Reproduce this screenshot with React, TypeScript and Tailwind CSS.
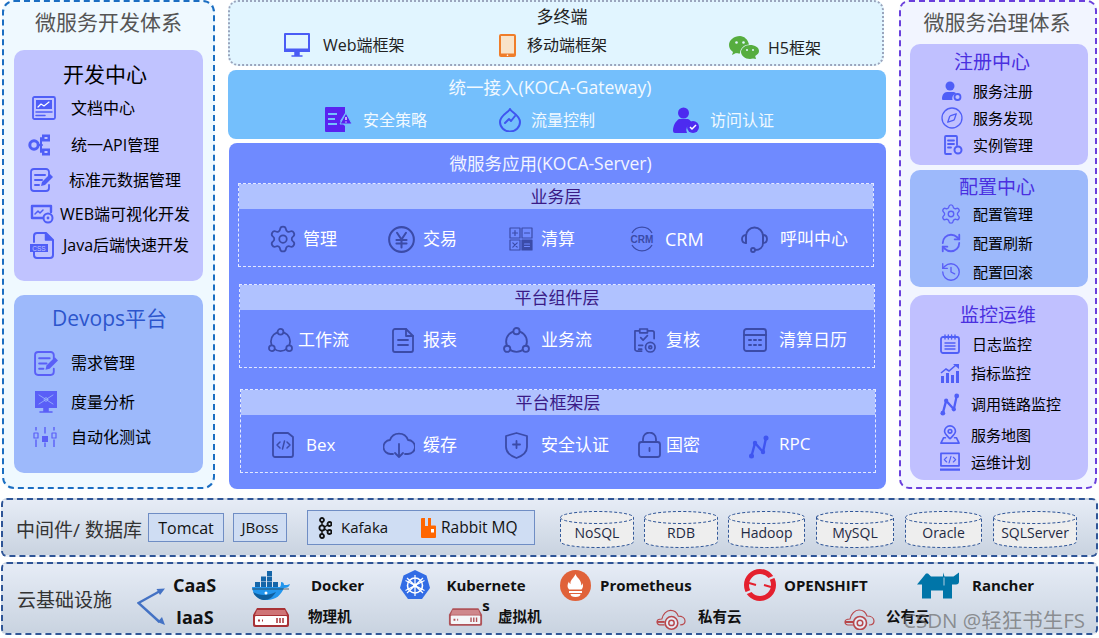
import type { ReactNode } from 'react'
import { RefreshCw, History, Settings, Compass } from 'lucide-react'

type IconProps = { className?: string }

function Ico({ className, children, box = '0 0 24 24' }: IconProps & { children: ReactNode; box?: string }) {
  return (
    <svg viewBox={box} fill="none" stroke="currentColor" strokeWidth="1.8" strokeLinecap="round" strokeLinejoin="round" className={className}>
      {children}
    </svg>
  )
}

/* ---- side panel icons ---- */
const DocChart = ({ className }: IconProps) => (
  <Ico className={className}>
    <rect x="1" y="1" width="22" height="22" rx="1.5" />
    <rect x="4" y="4" width="16" height="9" fill="currentColor" stroke="none" />
    <path d="M6 11l3-3 3 2 5-4" stroke="#fff" strokeWidth="1.2" />
    <path d="M4 16h16M4 19.5h9" strokeWidth="1.5" />
  </Ico>
)
const ApiNodes = ({ className }: IconProps) => (
  <Ico className={className}>
    <circle cx="6" cy="12" r="4.2" strokeWidth="3" />
    <path d="M10 12h4M13 5v14" strokeWidth="2" />
    <rect x="14" y="1.5" width="8" height="7" fill="currentColor" stroke="none" />
    <rect x="14" y="15.5" width="8" height="7" fill="currentColor" stroke="none" />
    <rect x="16.5" y="4" width="3" height="2" fill="#c0c3ff" stroke="none" />
    <rect x="16.5" y="18" width="3" height="2" fill="#c0c3ff" stroke="none" />
  </Ico>
)
const EditDoc = ({ className }: IconProps) => (
  <Ico className={className}>
    <path d="M19 8V4a3 3 0 0 0-3-3H4a3 3 0 0 0-3 3v16a3 3 0 0 0 3 3h12a3 3 0 0 0 3-3v-3" />
    <path d="M5 7h10M5 12h7M5 17h4" strokeWidth="2" />
    <path d="M11 18l1-4 8-8 3 3-8 8z" fill="currentColor" stroke="none" />
  </Ico>
)
const WebGear = ({ className }: IconProps) => (
  <Ico className={className} box="0 0 24 20">
    <path d="M13 14H2V2h19v6" strokeWidth="2.4" />
    <path d="M5 10l3-3 2 2 3-3" strokeWidth="1.5" />
    <circle cx="18" cy="14" r="4.5" strokeWidth="2" />
    <circle cx="18" cy="14" r="1.4" fill="currentColor" stroke="none" />
  </Ico>
)
const CssFile = ({ className }: IconProps) => (
  <Ico className={className} box="0 0 24 27">
    <path d="M4 10V4a3 3 0 0 1 3-3h9l7 7v15a3 3 0 0 1-3 3H7a3 3 0 0 1-3-3v-3" strokeWidth="2" />
    <path d="M15.5 1v7h7" fill="currentColor" strokeWidth="1.5" />
    <rect x="0" y="12" width="18" height="8" fill="currentColor" stroke="none" />
    <text x="9" y="18.5" textAnchor="middle" fontSize="6.5" fill="#c0c3ff" stroke="none" fontFamily="Liberation Sans">CSS</text>
  </Ico>
)
const MonitorNet = ({ className }: IconProps) => (
  <Ico className={className} box="0 0 22 22">
    <rect x="0" y="0" width="22" height="17" fill="currentColor" stroke="none" />
    <path d="M4 4l14 9M18 4L4 13" stroke="#9db9fb" strokeWidth="0.8" />
    <circle cx="11" cy="8.5" r="1.8" stroke="#9db9fb" strokeWidth="0.8" />
    <path d="M9 17h4v3H9zM5 21h12" fill="currentColor" strokeWidth="1.6" />
  </Ico>
)
const Sliders = ({ className }: IconProps) => (
  <Ico className={className} box="0 0 24 20">
    <path d="M3 0v3M3 13v7M12 0v6M12 16v4M21 0v3M21 13v7" strokeWidth="1.4" />
    <rect x="1" y="6" width="4" height="5" strokeWidth="1.2" />
    <rect x="19" y="6" width="4" height="5" strokeWidth="1.2" />
    <rect x="9" y="9" width="6" height="6" fill="currentColor" stroke="none" />
  </Ico>
)

/* ---- top ---- */
const WebScreen = ({ className }: IconProps) => (
  <Ico className={className} box="0 0 26 24">
    <rect x="1" y="1" width="24" height="17" fill="#e1f5ff" strokeWidth="2" />
    <rect x="0" y="15.5" width="26" height="3.5" fill="currentColor" stroke="none" />
    <path d="M11 19h4v3h-4zM8 23h10" fill="currentColor" strokeWidth="1.5" />
  </Ico>
)
const Tablet = ({ className }: IconProps) => (
  <Ico className={className} box="0 0 17 23">
    <rect x="0" y="0" width="17" height="23" rx="2" fill="currentColor" stroke="none" />
    <rect x="2" y="2" width="13" height="17.5" fill="#f8e3c9" stroke="none" />
    <circle cx="8.5" cy="21.2" r="0.8" fill="#fff" stroke="none" />
  </Ico>
)
const WeChat = ({ className }: IconProps) => (
  <svg viewBox="0 0 30 23" className={className}>
    <path d="M11 0C5 0 0 4 0 9c0 3 1.500 5 4 7l-1 3 4-2c1 .3 2 .5 4 .5 0-5 4-9 9-9-1-5-5-8.500-9-8.500z" fill="#56ad3f" />
    <path d="M21 9c-5 0-9 3.500-9 7s4 7 9 7c1 0 2-.2 3-.5l3 .5-.8-3c2.500-1.500 3.800-3 3.800-5 0-3.500-4-6-9-6z" fill="#56ad3f" />
    <circle cx="7.500" cy="6.500" r="1.300" fill="#e1f5ff" /><circle cx="14.500" cy="6.500" r="1.300" fill="#e1f5ff" />
    <circle cx="18" cy="14" r="1" fill="#e1f5ff" /><circle cx="24" cy="14" r="1" fill="#e1f5ff" />
  </svg>
)
const SecPolicy = ({ className }: IconProps) => (
  <svg viewBox="0 0 27 25" className={className}>
    <path d="M0 1a1 1 0 0 1 1-1h19v6l-5 8 5 5v6H1a1 1 0 0 1-1-1z" fill="#5a22f0" />
    <path d="M3 7h9M3 12h7M3 17h9" stroke="#74bffc" strokeWidth="1.800" />
    <path d="M21 6l6 11H15z" fill="#5a22f0" stroke="#74bffc" strokeWidth="1" />
    <path d="M21 10v3M21 14.500v1" stroke="#fff" strokeWidth="1.300" />
  </svg>
)
const FlowDrop = ({ className }: IconProps) => (
  <Ico className={className} box="0 0 22 24">
    <path d="M11 1c1 3 10 6 10 13a10 9.500 0 0 1-20 0C1 7 10 4 11 1z" strokeWidth="2" />
    <path d="M6 15l4-4 2 2 4-5" strokeWidth="2" />
  </Ico>
)
const UserCheck = ({ className }: IconProps) => (
  <svg viewBox="0 0 26 26" className={className}>
    <circle cx="10.500" cy="6" r="5.500" fill="#4d2bf0" />
    <path d="M0 24c0-6 3-10 6-12h9c2 1 3 2 4 4a7 7 0 0 0-5 10H2a2 2 0 0 1-2-2z" fill="#4d2bf0" />
    <circle cx="20" cy="20" r="6" fill="#4d2bf0" />
    <path d="M17 20l2 2 4-4" fill="none" stroke="#fff" strokeWidth="1.500" />
  </svg>
)

/* ---- server ---- */
const YenCircle = ({ className }: IconProps) => (
  <Ico className={className}>
    <circle cx="12" cy="12" r="11" />
    <path d="M8 6l4 6 4-6M7.500 12.500h9M7.500 15.500h9M12 12v7" />
  </Ico>
)
const CalcGrid = ({ className }: IconProps) => (
  <Ico className={className}>
    <g strokeWidth="1.200">
      <rect x="1" y="1" width="10" height="10" /><rect x="13" y="1" width="10" height="10" />
      <rect x="1" y="13" width="10" height="10" />
      <rect x="13" y="13" width="10" height="10" fill="currentColor" />
      <path d="M3.500 6h5M6 3.500v5M15.500 6h5M3.800 15.800l4.400 4.400M8.200 15.800l-4.400 4.400" />
      <path d="M15.500 17h5M15.500 19.500h5" stroke="#6f8aff" />
    </g>
  </Ico>
)
const CrmRing = ({ className }: IconProps) => (
  <svg viewBox="0 0 26 26" className={className}>
    <path d="M3 7a11.500 11.500 0 0 1 20 0M3 19a11.500 11.500 0 0 0 20 0" fill="none" stroke="currentColor" strokeWidth="1.300" />
    <text x="13" y="16.500" textAnchor="middle" fontSize="10" fontWeight="700" fill="currentColor" fontFamily="Liberation Sans">CRM</text>
  </svg>
)
const Headset = ({ className }: IconProps) => (
  <Ico className={className} box="0 0 27 27">
    <path d="M5 17V10a8.500 8.500 0 0 1 17 0v7c0 4-3 7-8 7" />
    <path d="M5 9C2 9 1 11 1 13s1 4 4 4zM22 9c3 0 4 2 4 4s-1 4-4 4z" />
    <circle cx="12" cy="24" r="2" />
  </Ico>
)
const FlowRing = ({ className }: IconProps) => (
  <Ico className={className} box="0 0 26 26">
    <circle cx="13" cy="14" r="10" />
    <circle cx="13" cy="4" r="3" fill="#6f8aff" />
    <circle cx="4" cy="21" r="3" fill="#6f8aff" />
    <circle cx="22" cy="21" r="3" fill="#6f8aff" />
  </Ico>
)
const Report = ({ className }: IconProps) => (
  <Ico className={className} box="0 0 22 25">
    <path d="M14 1H3a2 2 0 0 0-2 2v19a2 2 0 0 0 2 2h16a2 2 0 0 0 2-2V8z" />
    <path d="M14 1v7h7M6 12h10M6 17h10" />
  </Ico>
)
const CheckGear = ({ className }: IconProps) => (
  <Ico className={className} box="0 0 24 26">
    <path d="M8 24H3a2 2 0 0 1-2-2V3h4M15 3h4a2 2 0 0 1 2 2v6" />
    <path d="M6 1h8v4H6zM7 10l2.500 2.500L14 8M5 18h4M5 22h3" />
    <circle cx="17" cy="20" r="5" /><circle cx="17" cy="20" r="1.500" />
  </Ico>
)
const Calendar = ({ className }: IconProps) => (
  <Ico className={className}>
    <rect x="1" y="1" width="22" height="22" rx="2.500" />
    <path d="M1 7h22" />
    <path d="M6 12h2M11 12h2M16 12h2M6 17h2M11 17h2M16 17h2" strokeWidth="2" />
  </Ico>
)
const CodeFile = ({ className }: IconProps) => (
  <Ico className={className} box="0 0 23 26">
    <path d="M21 5V23a2 2 0 0 1-2 2H3a2 2 0 0 1-2-2V3a2 2 0 0 1 2-2h13z" />
    <path d="M8 10l-3 3 3 3M15 10l3 3-3 3M12.500 9l-2 8" strokeWidth="1.500" />
  </Ico>
)
const CloudDown = ({ className }: IconProps) => (
  <Ico className={className} box="0 0 32 28">
    <path d="M10 23H8a7 7 0 0 1-1-14 9.500 9.500 0 0 1 18 0 7 7 0 0 1 0 14h-3" />
    <path d="M16 13v13M12 22l4 4 4-4" />
  </Ico>
)
const ShieldPlus = ({ className }: IconProps) => (
  <Ico className={className} box="0 0 23 27">
    <path d="M11.500 1L22 4v11c0 5-5 9-10.500 11C6 24 1 20 1 15V4z" />
    <path d="M11.500 9v7M8 12.500h7" />
  </Ico>
)
const Lock = ({ className }: IconProps) => (
  <Ico className={className} box="0 0 23 26">
    <rect x="1" y="10" width="21" height="15" rx="2.500" />
    <path d="M5 10V7a6.500 6.500 0 0 1 13 0v3M11.500 16v3" />
  </Ico>
)
const RouteN = ({ className }: IconProps) => (
  <svg viewBox="0 0 20 24" fill="none" className={className}>
    <path d="M2.500 21L6 8l8 9 3-14" stroke="currentColor" strokeWidth="2.400" strokeLinejoin="round" />
    <circle cx="2.500" cy="21" r="2.500" fill="currentColor" />
    <circle cx="17" cy="3" r="2.500" fill="currentColor" />
    <circle cx="6" cy="8" r="2.200" fill="currentColor" />
    <circle cx="14" cy="17" r="2.200" fill="currentColor" />
  </svg>
)

/* ---- right panel ---- */
const UserGear = ({ className }: IconProps) => (
  <svg viewBox="0 0 20 20" className={className}>
    <circle cx="8" cy="5" r="4.500" fill="currentColor" />
    <path d="M0 18c0-4 2-7 5-7h6c1.500 0 2.500.5 3 1.500a5 5 0 0 0-3.500 6.500H1a1 1 0 0 1-1-1z" fill="currentColor" />
    <circle cx="15.500" cy="16" r="3" fill="none" stroke="currentColor" strokeWidth="1.800" />
  </svg>
)
const DocGear = ({ className }: IconProps) => (
  <Ico className={className} box="0 0 20 20">
    <path d="M8 19H3a1 1 0 0 1-1-1V2a1 1 0 0 1 1-1h10a1 1 0 0 1 1 1v8" />
    <path d="M5 5.500h6M5 9h6M5 12.500h3" />
    <circle cx="15" cy="15" r="3.500" strokeWidth="2" />
  </Ico>
)
const Notepad = ({ className }: IconProps) => (
  <Ico className={className} box="0 0 20 20" >
    <rect x="1" y="3" width="18" height="16" rx="2" />
    <path d="M5 1v4M8.300 1v4M11.600 1v4M15 1v4M5 9h10M5 12h10M5 15h10" strokeWidth="1.400" />
  </Ico>
)
const ChartUp = ({ className }: IconProps) => (
  <svg viewBox="0 0 20 20" className={className}>
    <path d="M1 13h3v7H1zM6 10h3v10H6zM11 12h3v8h-3zM16 8h3v12h-3z" fill="currentColor" />
    <path d="M1 10l5-4 3 2 7-6" fill="none" stroke="currentColor" strokeWidth="1.600" />
    <path d="M13 1h6v5z" fill="currentColor" />
  </svg>
)
const MapPinBase = ({ className }: IconProps) => (
  <Ico className={className} box="0 0 22 20">
    <path d="M11 14C8 11 5 9 5 6a6 6 0 0 1 12 0c0 3-3 5-6 8z" />
    <circle cx="11" cy="6" r="2" />
    <path d="M6 13H4l-3 6h20l-3-6h-2" />
  </Ico>
)
const CodeScreen = ({ className }: IconProps) => (
  <Ico className={className} box="0 0 21 20">
    <rect x="1" y="1" width="19" height="13" />
    <path d="M7 5L4.500 7.500 7 10M14 5l2.500 2.500L14 10M11.500 4l-2 7" strokeWidth="1.200" />
    <path d="M0 18h21" strokeWidth="2.400" />
  </Ico>
)

/* ---- bottom ---- */
const KafkaLogo = ({ className }: IconProps) => (
  <Ico className={className} box="0 0 14 22">
    <circle cx="4" cy="3" r="2" /><circle cx="4" cy="11" r="2.600" /><circle cx="4" cy="19" r="2" />
    <circle cx="11.500" cy="7" r="2" /><circle cx="11.500" cy="15" r="2" />
    <path d="M4 5v3.500M4 13.500V17M6.500 10l3.300-2M6.500 12l3.300 2" strokeWidth="1.400" />
  </Ico>
)
const RabbitLogo = ({ className }: IconProps) => (
  <svg viewBox="0 0 15 20" className={className}>
    <path d="M1 0h3v8h3V0h3v7.500h4a1 1 0 0 1 1 1V19a1 1 0 0 1-1 1H1a1 1 0 0 1-1-1V1a1 1 0 0 1 1-1z" fill="#ff6600" />
    <rect x="10" y="11" width="3" height="3.500" fill="#ffffff" />
  </svg>
)
const DockerLogo = ({ className }: IconProps) => (
  <svg viewBox="0 0 38 29" className={className}>
    <path d="M3 7h5v5H3zM9 7h5v5H9zM15 7h5v5h-5zM21 7h5v5h-5zM9 1.500h5v5H9zM15 1.500h5v5h-5zM15-4h5v5h-5z" transform="translate(0 4)" fill="#1565a8" />
    <path d="M0 16h28c1-1 1-3 1-5 2 0 3 1 3 3 2 0 4 0 6-1-1 3-3 4-6 4-3 7-8 12-17 12C6 29 1 24 0 16z" fill="#2396ed" />
    <path d="M1 21c6 4 15 4 23 0-3 5-7 8-11 8-5 0-10-3-12-8z" fill="#0f5f9e" />
    <circle cx="14" cy="22" r="1.500" fill="#fff" />
    <path d="M0 18h37" stroke="#263238" strokeWidth=".7" />
  </svg>
)
const K8sLogo = ({ className }: IconProps) => (
  <svg viewBox="0 0 30 30" className={className}>
    <path d="M15 0l11.500 5.500L30 18l-8 11H8L0 18 3.500 5.500z" fill="#326ce5" />
    <circle cx="15" cy="15.500" r="7.500" fill="none" stroke="#fff" strokeWidth="1.600" />
    <circle cx="15" cy="15.500" r="2" fill="#fff" />
    <path d="M15 5v21M5.500 10.500l19 10M24.500 10.500l-19 10M7 23l16-15M23 23L7 8" stroke="#fff" strokeWidth="1.200" />
  </svg>
)
const PromLogo = ({ className }: IconProps) => (
  <svg viewBox="0 0 31 31" className={className}>
    <circle cx="15.500" cy="15.500" r="15.500" fill="#e0623a" />
    <path d="M15.500 4c1 3 3 4 4.500 6.500 1.500 2.500 1 4 1.500 5 .5-.7 1-1.500 1-2.500 1 3 .5 5-1 6.500H9c-2-2-2-5 0-8 0 1 .5 2 1.500 2.500-.5-3 1-4 2.500-6 1-1.300 2-2.500 2.500-4z" fill="#fff" />
    <path d="M9 21h13v2H9zM10.500 24h10a5 3 0 0 1-10 0z" fill="#fff" />
  </svg>
)
const OpenShiftLogo = ({ className }: IconProps) => (
  <svg viewBox="0 0 32 36" fill="none" className={className}>
    <circle cx="16" cy="18" r="13.500" stroke="#e4202e" strokeWidth="5" />
    <path d="M20 14l12-5M0 27l12-5" stroke="#dde4f0" strokeWidth="2.400" />
    <path d="M5 16l7 2M20 18l7 2" stroke="#e4202e" strokeWidth="2" />
  </svg>
)
const RancherLogo = ({ className }: IconProps) => (
  <svg viewBox="0 0 42 28" className={className}>
    <path d="M0 13L9 2h2l3 3h12V1l1.500 4h9L42 1v9a3 3 0 0 1-3 3h-4v14h-9v-8H14v8H5V13z" fill="#0075a8" />
    <path d="M27 6v8" stroke="#dde4f0" strokeWidth=".8" />
  </svg>
)
const ServerRed = ({ className }: IconProps) => (
  <svg viewBox="0 0 38 21" fill="none" className={className}>
    <path d="M5 1h28l4 7v10a2 2 0 0 1-2 2H3a2 2 0 0 1-2-2V8z" fill="#a83236" />
    <path d="M5 3h28l2 5H3z" fill="#cf7476" />
    <rect x="3" y="9" width="32" height="9" rx="1" fill="#fff" />
    <path d="M6 13.500h2M10 13.500h1" stroke="#a83236" strokeWidth="2" />
    <path d="M28 11v5M31 11v5M25 11v5" stroke="#a83236" strokeWidth="1.500" />
  </svg>
)
const CloudRed = ({ className }: IconProps) => (
  <svg viewBox="0 0 31 21" fill="none" className={className}>
    <path d="M9 16H4a3 3 0 0 1-3-3c0-1.500 1.500-3 5-3 1-5 5-9 9-9s7 3 8 6c4 0 7 2 7 5s-2 4-5 4" stroke="#b8474b" strokeWidth="1.200" />
    <path d="M1 13h8" stroke="#b8474b" strokeWidth="2" />
    <circle cx="16" cy="14" r="6.500" fill="#e6ecf6" stroke="#b8474b" strokeWidth="1.600" />
    <circle cx="16" cy="14" r="2.800" stroke="#b8474b" strokeWidth="1.500" />
  </svg>
)
const BranchArrows = ({ className }: IconProps) => (
  <svg viewBox="0 0 28 38" fill="none" className={className}>
    <path d="M24 2.500L1.500 15l21 19" stroke="#4472c4" strokeWidth="2.400" />
    <path d="M28 .5l-8.500.5 3.500 6zM28 37l-3-8-4.500 5z" fill="#4472c4" />
  </svg>
)

/* ---- blocks ---- */
function Item({ icon, label, className, gap }: { icon: ReactNode; label: string; className: string; gap: string }) {
  return (
    <div className={`flex items-center ${className}`}>
      {icon}
      <span className={`whitespace-nowrap text-black ${gap}`}>{label}</span>
    </div>
  )
}

function Cell({ icon, label, className = '', gap }: { icon: ReactNode; label: string; className?: string; gap: string }) {
  return (
    <div className={`flex shrink-0 items-center ${className}`}>
      {icon}
      <span className={`whitespace-nowrap ${gap}`}>{label}</span>
    </div>
  )
}

function Layer({ title, className, children }: { title: string; className: string; children: ReactNode }) {
  return (
    <div className={`flex h-[84px] w-[636px] flex-col border border-dashed border-[#e4e9ff] ${className}`}>
      <div className="flex h-[25px] shrink-0 items-center justify-center bg-[#b0c2ff] text-[17px] text-[#3a1a86]">{title}</div>
      <div className="flex flex-1 items-center pt-[3px] text-[17px] text-white">{children}</div>
    </div>
  )
}

function Cylinder({ label, className }: { label: string; className: string }) {
  return (
    <div className={`relative mt-[4px] flex h-[37px] shrink-0 items-center justify-center pt-[5px] text-[14px] text-[#1f2a44] ${className}`}>
      <svg viewBox="0 0 80 37" preserveAspectRatio="none" className="absolute inset-0 h-full w-full">
        <path d="M.5 6.500C.5 3 18 .5 40 .5s39.500 2.500 39.500 6v24c0 3.500-17.500 6-39.500 6S.5 34 .5 30.500z" fill="#eeeeee" stroke="#2f5597" strokeWidth="1" strokeDasharray="3 2" vectorEffect="non-scaling-stroke" />
        <path d="M.5 6.500C.5 10 18 12.500 40 12.500s39.500-2.500 39.500-6" fill="none" stroke="#2f5597" strokeWidth="1" strokeDasharray="3 2" vectorEffect="non-scaling-stroke" />
      </svg>
      <span className="relative">{label}</span>
    </div>
  )
}

const Bold = ({ children, className = '' }: { children: ReactNode; className?: string }) => (
  <span className={`whitespace-nowrap font-bold text-[#111] ${className}`}>{children}</span>
)

export default function App() {
  return (
    <div className="relative flex h-[638px] w-[1099px] flex-col overflow-hidden bg-white font-['Open_Sans','Noto_Sans_CJK_SC',sans-serif]">
      <div className="flex h-[490px] shrink-0">
        {/* Left */}
        <div className="ml-[2px] h-[489px] w-[213px] rounded-[12px] border-2 border-dashed border-[#1b6ec2] bg-[#eff9ff]">
          <div className="flex h-[48px] items-center justify-center pb-[7px] text-[21px] text-[#555]">微服务开发体系</div>
          <div className="ml-[10px] h-[231px] w-[189px] rounded-[10px] bg-[#c0c3ff] text-[16px] text-[#4f5ef7]">
            <div className="flex h-[46px] items-center justify-center pr-[7px] pt-[4px] text-[21px] text-black">开发中心</div>
            <Item className="h-[24px] pl-[18px]" gap="ml-[15px]" label="文档中心" icon={<DocChart className="size-[24px]" />} />
            <Item className="mt-[13px] h-[24px] pl-[14px]" gap="ml-[19px]" label="统一API管理" icon={<ApiNodes className="size-[24px]" />} />
            <Item className="mt-[11px] h-[24px] pl-[16px]" gap="ml-[15px]" label="标准元数据管理" icon={<EditDoc className="size-[24px]" />} />
            <Item className="mt-[10px] h-[24px] pl-[16px]" gap="ml-[6px]" label="WEB端可视化开发" icon={<WebGear className="h-[20px] w-[24px]" />} />
            <Item className="mt-[7px] h-[24px] pl-[16px]" gap="ml-[9px]" label="Java后端快速开发" icon={<CssFile className="h-[27px] w-[24px] shrink-0" />} />
          </div>
          <div className="ml-[10px] mt-[14px] h-[178px] w-[189px] rounded-[10px] bg-[#9db9fb] text-[16px] text-[#5a5ff7]">
            <div className="flex h-[48px] items-center justify-center pl-[2px] text-[21px] text-[#2c55cc]">Devops平台</div>
            <Item className="mt-[8px] h-[24px] pl-[20px]" gap="ml-[12px]" label="需求管理" icon={<EditDoc className="h-[25px] w-[25px]" />} />
            <Item className="mt-[15px] h-[24px] pl-[21px]" gap="ml-[14px]" label="度量分析" icon={<MonitorNet className="size-[22px]" />} />
            <Item className="mt-[11px] h-[24px] pl-[19px]" gap="ml-[14px]" label="自动化测试" icon={<Sliders className="h-[20px] w-[24px]" />} />
          </div>
        </div>

        {/* Center */}
        <div className="ml-[13px] w-[658px]">
          <div className="h-[66px] w-[656px] rounded-[10px] border-2 border-dotted border-[#9aa5bd] bg-[#e1f5ff] text-[16px] text-[#222]">
            <div className="flex h-[30px] items-center justify-center pl-[12px] text-[17px]">多终端</div>
            <div className="flex h-[26px] items-center pl-[54px]">
              <Cell className="w-[215px]" gap="ml-[13px]" label="Web端框架" icon={<WebScreen className="h-[24px] w-[26px] text-[#4a5cf5]" />} />
              <Cell className="w-[230px]" gap="ml-[11px]" label="移动端框架" icon={<Tablet className="h-[23px] w-[17px] text-[#ef7d2a]" />} />
              <Cell className="mt-[5px]" gap="ml-[9px]" label="H5框架" icon={<WeChat className="h-[23px] w-[30px]" />} />
            </div>
          </div>
          <div className="mt-[4px] h-[69px] rounded-[8px] bg-[#74bffc] text-[16px] text-[#f2f9ff]">
            <div className="flex h-[34px] items-center justify-center pr-[14px] text-[17.5px]">统一接入(KOCA-Gateway)</div>
            <div className="flex h-[30px] items-center pl-[97px] pt-[1px]">
              <Cell className="w-[174px]" gap="ml-[11px]" label="安全策略" icon={<SecPolicy className="h-[25px] w-[27px]" />} />
              <Cell className="w-[174px]" gap="ml-[10px]" label="流量控制" icon={<FlowDrop className="h-[24px] w-[22px] text-[#3f55f0]" />} />
              <Cell gap="ml-[11px]" label="访问认证" icon={<UserCheck className="size-[26px]" />} />
            </div>
          </div>
          <div className="ml-[1px] mt-[4px] h-[346px] w-[657px] rounded-[8px] bg-[#6f8aff]">
            <div className="flex h-[40px] items-center justify-center pr-[14px] pt-[1px] text-[17.5px] text-[#f2f4ff]">微服务应用(KOCA-Server)</div>

            <Layer title="业务层" className="ml-[9px]">
              <div className="flex items-center pl-[31px] text-[#3b4ba8]">
                <Cell className="w-[118px]" gap="ml-[8px] text-white" label="管理" icon={<Settings className="-mx-[2.5px] size-[30px]" strokeWidth={1.4} />} />
                <Cell className="w-[121px]" gap="ml-[8px] text-white" label="交易" icon={<YenCircle className="size-[27px]" />} />
                <Cell className="w-[120px]" gap="ml-[8px] text-white" label="清算" icon={<CalcGrid className="size-[24px]" />} />
                <Cell className="w-[112px]" gap="ml-[10px] text-[18px] text-white" label="CRM" icon={<CrmRing className="size-[26px]" />} />
                <Cell gap="ml-[12px] text-white" label="呼叫中心" icon={<Headset className="size-[27px]" />} />
              </div>
            </Layer>

            <Layer title="平台组件层" className="ml-[10px] mt-[17px]">
              <div className="flex items-center pl-[28px] text-[#3b4ba8]">
                <Cell className="w-[124px]" gap="ml-[5px] text-white" label="工作流" icon={<FlowRing className="size-[25px]" />} />
                <Cell className="w-[111px]" gap="ml-[9px] text-white" label="报表" icon={<Report className="h-[25px] w-[22px]" />} />
                <Cell className="w-[131px]" gap="ml-[11px] text-white" label="业务流" icon={<FlowRing className="size-[27px]" />} />
                <Cell className="w-[109px]" gap="ml-[9px] text-white" label="复核" icon={<CheckGear className="h-[25px] w-[23px]" />} />
                <Cell gap="ml-[12px] text-white" label="清算日历" icon={<Calendar className="size-[24px]" />} />
              </div>
            </Layer>

            <Layer title="平台框架层" className="ml-[11px] mt-[21px]">
              <div className="flex items-center pl-[31px] text-[#3b4ba8]">
                <Cell className="w-[111px]" gap="ml-[11px] text-white" label="Bex" icon={<CodeFile className="h-[26px] w-[23px]" />} />
                <Cell className="w-[122px]" gap="ml-[8px] text-white" label="缓存" icon={<CloudDown className="h-[28px] w-[32px]" />} />
                <Cell className="w-[133px]" gap="ml-[13px] text-white" label="安全认证" icon={<ShieldPlus className="h-[27px] w-[23px]" />} />
                <Cell className="w-[111px]" gap="ml-[5px] text-white" label="国密" icon={<Lock className="h-[26px] w-[23px]" />} />
                <Cell gap="ml-[10px] -mt-[2px] text-white" label="RPC" icon={<RouteN className="mt-[4px] h-[24px] w-[20px] text-[#3f55f0]" />} />
              </div>
            </Layer>
          </div>
        </div>

        {/* Right */}
        <div className="ml-[13px] h-[489px] w-[198px] rounded-[10px] border-2 border-dashed border-[#6a3fdc] bg-[#f2f5ff]">
          <div className="flex h-[42px] items-center justify-center pr-[2px] text-[21px] text-[#555]">微服务治理体系</div>
          <div className="ml-[9px] h-[121px] w-[178px] rounded-[10px] bg-[#c0c0ff] text-[15px] text-[#4f5ef7]">
            <div className="flex h-[36px] items-center justify-center pr-[14px] text-[19px] text-[#4a2fe0]">注册中心</div>
            <Item className="mt-[1px] h-[20px] pl-[32px]" gap="ml-[11px]" label="服务注册" icon={<UserGear className="size-[20px]" />} />
            <Item className="mt-[7px] h-[20px] pl-[30px]" gap="ml-[9px]" label="服务发现" icon={<Compass className="size-[24px]" strokeWidth={1.3} />} />
            <Item className="mt-[7px] h-[20px] pl-[33px]" gap="ml-[10px]" label="实例管理" icon={<DocGear className="size-[20px]" />} />
          </div>
          <div className="ml-[9px] mt-[5px] h-[117px] w-[178px] rounded-[10px] bg-[#9db9fb] text-[15px] text-[#5a5ff7]">
            <div className="flex h-[34px] items-center justify-center pr-[4px] pt-[1px] text-[19px] text-[#4a2fe0]">配置中心</div>
            <Item className="h-[20px] pl-[30px]" gap="ml-[11px]" label="配置管理" icon={<Settings className="size-[22px]" strokeWidth={1.5} />} />
            <Item className="mt-[9px] h-[20px] pl-[30px]" gap="ml-[11px]" label="配置刷新" icon={<RefreshCw className="size-[22px]" strokeWidth={2} />} />
            <Item className="mt-[9px] h-[20px] pl-[30px]" gap="ml-[11px]" label="配置回滚" icon={<History className="size-[22px]" strokeWidth={1.5} />} />
          </div>
          <div className="ml-[9px] mt-[8px] h-[185px] w-[178px] rounded-[14px] bg-[#c0c0ff] text-[15px] text-[#4f5ef7]">
            <div className="flex h-[39px] items-center justify-center pr-[2px] pt-[1px] text-[19px] text-[#4a2fe0]">监控运维</div>
            <Item className="h-[20px] pl-[30px]" gap="ml-[12px]" label="日志监控" icon={<Notepad className="size-[20px]" />} />
            <Item className="mt-[9px] h-[20px] pl-[30px]" gap="ml-[11px]" label="指标监控" icon={<ChartUp className="size-[20px]" />} />
            <Item className="mt-[11px] h-[20px] pl-[30px]" gap="ml-[11px]" label="调用链路监控" icon={<RouteN className="h-[23px] w-[20px] shrink-0" />} />
            <Item className="mt-[11px] h-[20px] pl-[30px]" gap="ml-[11px]" label="服务地图" icon={<MapPinBase className="h-[20px] w-[20px]" />} />
            <Item className="mt-[7px] h-[20px] pl-[30px]" gap="ml-[11px]" label="运维计划" icon={<CodeScreen className="h-[20px] w-[20px]" />} />
          </div>
        </div>
      </div>

      {/* Middleware */}
      <div className="ml-[1px] mt-[8px] flex h-[59px] w-[1097px] items-center rounded-[6px] border-2 border-dashed border-[#2f5597] bg-gradient-to-b from-[#e6ecf6] to-[#c9d3e0] pl-[13px]">
        <div className="w-[125px] whitespace-nowrap pt-[5px] text-[19px] text-[#333]">中间件/ 数据库</div>
        <div className="ml-[7px] flex h-[29px] w-[76px] items-center justify-center border border-[#6f8dc4] bg-[#cfddf3] text-[16px] text-[#111]">Tomcat</div>
        <div className="ml-[9px] flex h-[29px] w-[54px] items-center justify-center border border-[#6f8dc4] bg-[#cfddf3] text-[15px] text-[#111]">JBoss</div>
        <div className="ml-[20px] flex h-[35px] w-[228px] items-center border border-[#6f8dc4] bg-[#cfddf3] pl-[10px] text-[15px] text-[#111]">
          <Cell className="w-[103px]" gap="ml-[9px]" label="Kafaka" icon={<KafkaLogo className="h-[22px] w-[14px] text-[#111]" />} />
          <Cell gap="ml-[5px] text-[15.5px]" label="Rabbit MQ" icon={<RabbitLogo className="h-[20px] w-[15px]" />} />
        </div>
        <Cylinder label="NoSQL" className="ml-[25px] w-[74px]" />
        <Cylinder label="RDB" className="ml-[10px] w-[74px]" />
        <Cylinder label="Hadoop" className="ml-[10px] w-[77px]" />
        <Cylinder label="MySQL" className="ml-[11px] w-[78px]" />
        <Cylinder label="Oracle" className="ml-[11px] w-[77px]" />
        <Cylinder label="SQLServer" className="ml-[11px] w-[84px]" />
      </div>

      {/* Cloud infrastructure */}
      <div className="ml-[1px] mt-[5px] flex h-[73px] w-[1097px] rounded-[6px] border-2 border-dashed border-[#2f5597] bg-gradient-to-b from-[#e6ecf6] to-[#c9d3e0] pl-[14px]">
        <div className="w-[95px] shrink-0 self-center whitespace-nowrap pt-[3px] text-[19px] text-[#333]">云基础设施</div>
        <BranchArrows className="ml-[25px] mt-[24px] h-[38px] w-[28px] shrink-0" />
        <div className="ml-[8px] flex flex-col pt-[8px] text-[15px]">
          <div className="flex h-[26px] items-center">
            <Bold className="w-[79px] text-[18px]">CaaS</Bold>
            <div className="flex w-[148px] shrink-0 items-center">
              <DockerLogo className="h-[29px] w-[38px]" />
              <Bold className="ml-[21px]">Docker</Bold>
            </div>
            <div className="flex w-[160px] shrink-0 items-center">
              <K8sLogo className="size-[30px]" />
              <span className="ml-[16px] h-[20px] w-[80px] break-all text-center font-bold leading-[20px] text-[#111]">Kubernetes</span>
            </div>
            <div className="flex w-[184px] shrink-0 items-center">
              <PromLogo className="size-[31px]" />
              <Bold className="ml-[9px]">Prometheus</Bold>
            </div>
            <div className="flex w-[173px] shrink-0 items-center">
              <OpenShiftLogo className="h-[36px] w-[32px]" />
              <Bold className="ml-[8px]">OPENSHIFT</Bold>
            </div>
            <div className="flex items-center">
              <RancherLogo className="h-[29px] w-[42px]" />
              <Bold className="ml-[13px]">Rancher</Bold>
            </div>
          </div>
          <div className="mt-[6px] flex h-[26px] items-center text-[14.5px]">
            <Bold className="w-[79px] pl-[3px] text-[18px]">IaaS</Bold>
            <div className="flex w-[196px] shrink-0 items-center">
              <ServerRed className="h-[21px] w-[38px]" />
              <Bold className="ml-[18px]">物理机</Bold>
            </div>
            <div className="flex w-[208px] shrink-0 items-center">
              <ServerRed className="h-[24px] w-[35px] opacity-80" />
              <Bold className="ml-[15px]">虚拟机</Bold>
            </div>
            <div className="flex w-[188px] shrink-0 items-center">
              <CloudRed className="mt-[4px] h-[21px] w-[30px]" />
              <Bold className="ml-[12px]">私有云</Bold>
            </div>
            <div className="flex items-center">
              <CloudRed className="mt-[4px] h-[21px] w-[31px]" />
              <Bold className="ml-[11px]">公有云</Bold>
            </div>
          </div>
        </div>
      </div>

      {/* Watermark */}
      <div className="absolute bottom-[6px] right-[14px] whitespace-nowrap text-[20.5px] leading-[24px] text-[#6b6b6b]/70">CSDN @轻狂书生FS</div>
    </div>
  )
}
